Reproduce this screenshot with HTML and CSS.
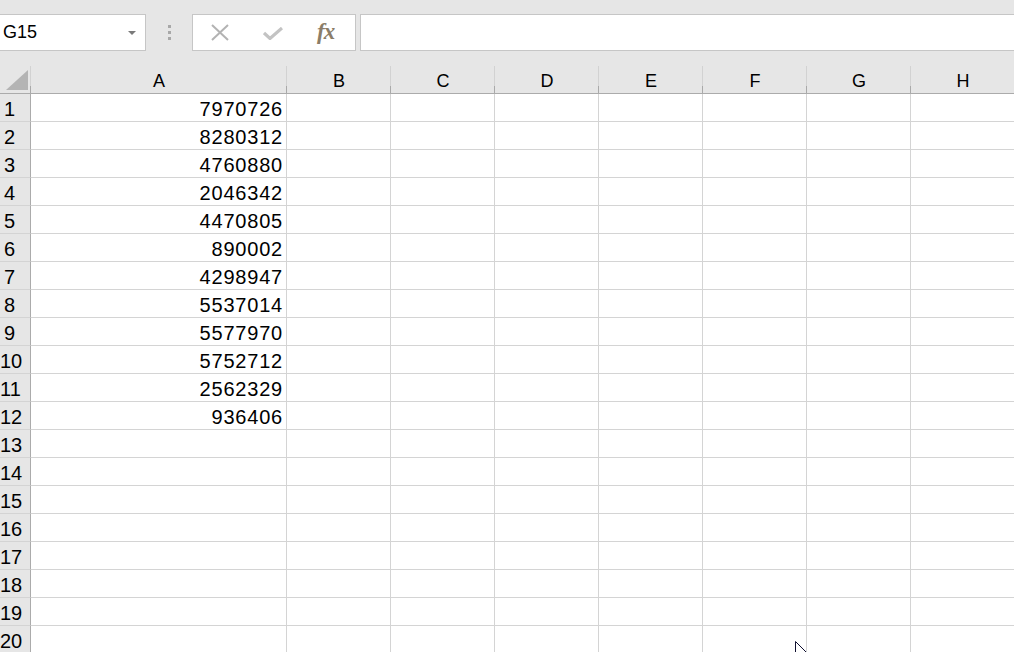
FILE: index.html
```html
<!DOCTYPE html>
<html lang="en">
<head>
  <meta charset="UTF-8">
  <title>Book1 - Excel</title>
  <link rel="stylesheet" href="styles.css">
</head>
<body>
  <!-- Formula bar -->
  <div class="toolbar">
    <div class="name-box">
      <span class="name-text">G15</span>
      <span class="name-arrow"></span>
    </div>
    <div class="grip">
      <span></span><span></span><span></span>
    </div>
    <div class="fn-box">
      <svg class="fn-icon" width="18" height="17" viewBox="0 0 18 17">
        <path d="M1 1 L17 16 M17 1 L1 16" stroke="#b3b3b3" stroke-width="2" fill="none"/>
      </svg>
      <svg class="fn-icon" width="20" height="13" viewBox="0 0 20 13">
        <path d="M1 6 L7 11.5 L19 1" stroke="#c3c3c3" stroke-width="3.2" fill="none"/>
      </svg>
      <span class="fx">fx</span>
    </div>
    <div class="formula-input"></div>
  </div>

  <!-- Sheet -->
  <div class="sheet" id="sheet">
    <div class="col-head corner">
      <svg width="22" height="20" viewBox="0 0 22 20">
        <polygon points="22,0 22,20 0,20" fill="#b4b4b4"/>
      </svg>
    </div>
    <div class="col-head">A</div>
    <div class="col-head">B</div>
    <div class="col-head">C</div>
    <div class="col-head">D</div>
    <div class="col-head">E</div>
    <div class="col-head">F</div>
    <div class="col-head">G</div>
    <div class="col-head">H</div>
  </div>

  <svg class="cursor" width="14" height="20" viewBox="0 0 14 20">
    <path d="M0.5 0.5 L0.5 16 L4 12.5 L6.5 18.5 L9 17.5 L6.5 11.5 L11.5 11.5 Z" fill="#fff" stroke="#101030" stroke-width="1"/>
  </svg>

  <script>
    const values = [7970726, 8280312, 4760880, 2046342, 4470805, 890002,
      4298947, 5537014, 5577970, 5752712, 2562329, 936406];
    const sheet = document.getElementById("sheet");

    for (let r = 1; r <= 20; r++) {
      const head = document.createElement("div");
      head.className = "row-head";
      head.textContent = r;
      sheet.appendChild(head);

      for (let c = 0; c < 8; c++) {
        const cell = document.createElement("div");
        cell.className = "cell";
        if (c === 0 && values[r - 1] !== undefined) {
          cell.textContent = values[r - 1];
        }
        sheet.appendChild(cell);
      }
    }
  </script>
</body>
</html>
```

FILE: styles.css
```css
:root {
  --chrome: #e6e6e6;
  --box-border: #c6c6c6;
  --grid: #d4d4d4;
  --head-line: #ababab;
  --font: 'Liberation Sans', Arial, sans-serif;
}

* {
  margin: 0;
  padding: 0;
  box-sizing: border-box;
}

body {
  width: 1014px;
  height: 652px;
  overflow: hidden;
  background: var(--chrome);
  font-family: var(--font);
  color: #000;
}

/* Formula bar */
.toolbar {
  height: 66px;
  padding-top: 14px;
  display: flex;
  align-items: flex-start;
}

.name-box {
  width: 147px;
  height: 37px;
  margin-left: -1px;
  background: #fff;
  border: 1px solid var(--box-border);
  display: flex;
  align-items: center;
  justify-content: space-between;
  padding: 0 9px 0 3px;
}

.name-text {
  font-size: 18px;
}

.name-arrow {
  width: 0;
  height: 0;
  border-left: 4px solid transparent;
  border-right: 4px solid transparent;
  border-top: 4px solid #7a7a7a;
}

.grip {
  width: 46px;
  height: 37px;
  display: flex;
  flex-direction: column;
  align-items: center;
  justify-content: center;
  gap: 3px;
}

.grip span {
  width: 3px;
  height: 3px;
  background: #a8a8a8;
}

.fn-box {
  width: 164px;
  height: 37px;
  background: #fff;
  border: 1px solid var(--box-border);
  display: flex;
  align-items: center;
  padding-left: 18px;
}

.fn-icon:first-child {
  margin-right: 34px;
}

.fn-icon:nth-child(2) {
  margin-right: 34px;
  margin-top: 2px;
}

.fx {
  font-family: 'Liberation Serif', 'Times New Roman', serif;
  font-style: italic;
  font-weight: bold;
  font-size: 23px;
  color: #8b7d68;
  letter-spacing: -1px;
  margin-top: -2px;
}

.formula-input {
  flex: 1;
  height: 37px;
  margin-left: 4px;
  margin-right: -2px;
  background: #fff;
  border: 1px solid var(--box-border);
}

/* Sheet grid */
.sheet {
  display: grid;
  grid-template-columns: 31px 256px repeat(7, 104px);
  grid-auto-rows: 28px;
  background: #fff;
}

.col-head {
  background:
    linear-gradient(#a9a9a9, #a9a9a9) right bottom / 1px 7px no-repeat,
    linear-gradient(#d2d2d2, #d2d2d2) right top / 1px 100% no-repeat,
    var(--chrome);
  border-bottom: 1px solid var(--head-line);
  font-size: 18px;
  text-align: center;
  line-height: 31px;
}

.corner {
  display: flex;
  align-items: flex-start;
  padding: 4px 0 0 6px;
}

.row-head {
  background: var(--chrome);
  border-right: 1px solid var(--head-line);
  border-bottom: 1px solid var(--grid);
  font-size: 20px;
  line-height: 31px;
  text-align: center;
  padding-right: 11px;
  white-space: nowrap;
}

.cell {
  border-right: 1px solid var(--grid);
  border-bottom: 1px solid var(--grid);
  font-size: 20px;
  line-height: 31px;
  text-align: right;
  padding-right: 3px;
  letter-spacing: 0.8px;
  overflow: hidden;
}

/* Mouse pointer */
.cursor {
  position: absolute;
  left: 795px;
  top: 641px;
}
```
